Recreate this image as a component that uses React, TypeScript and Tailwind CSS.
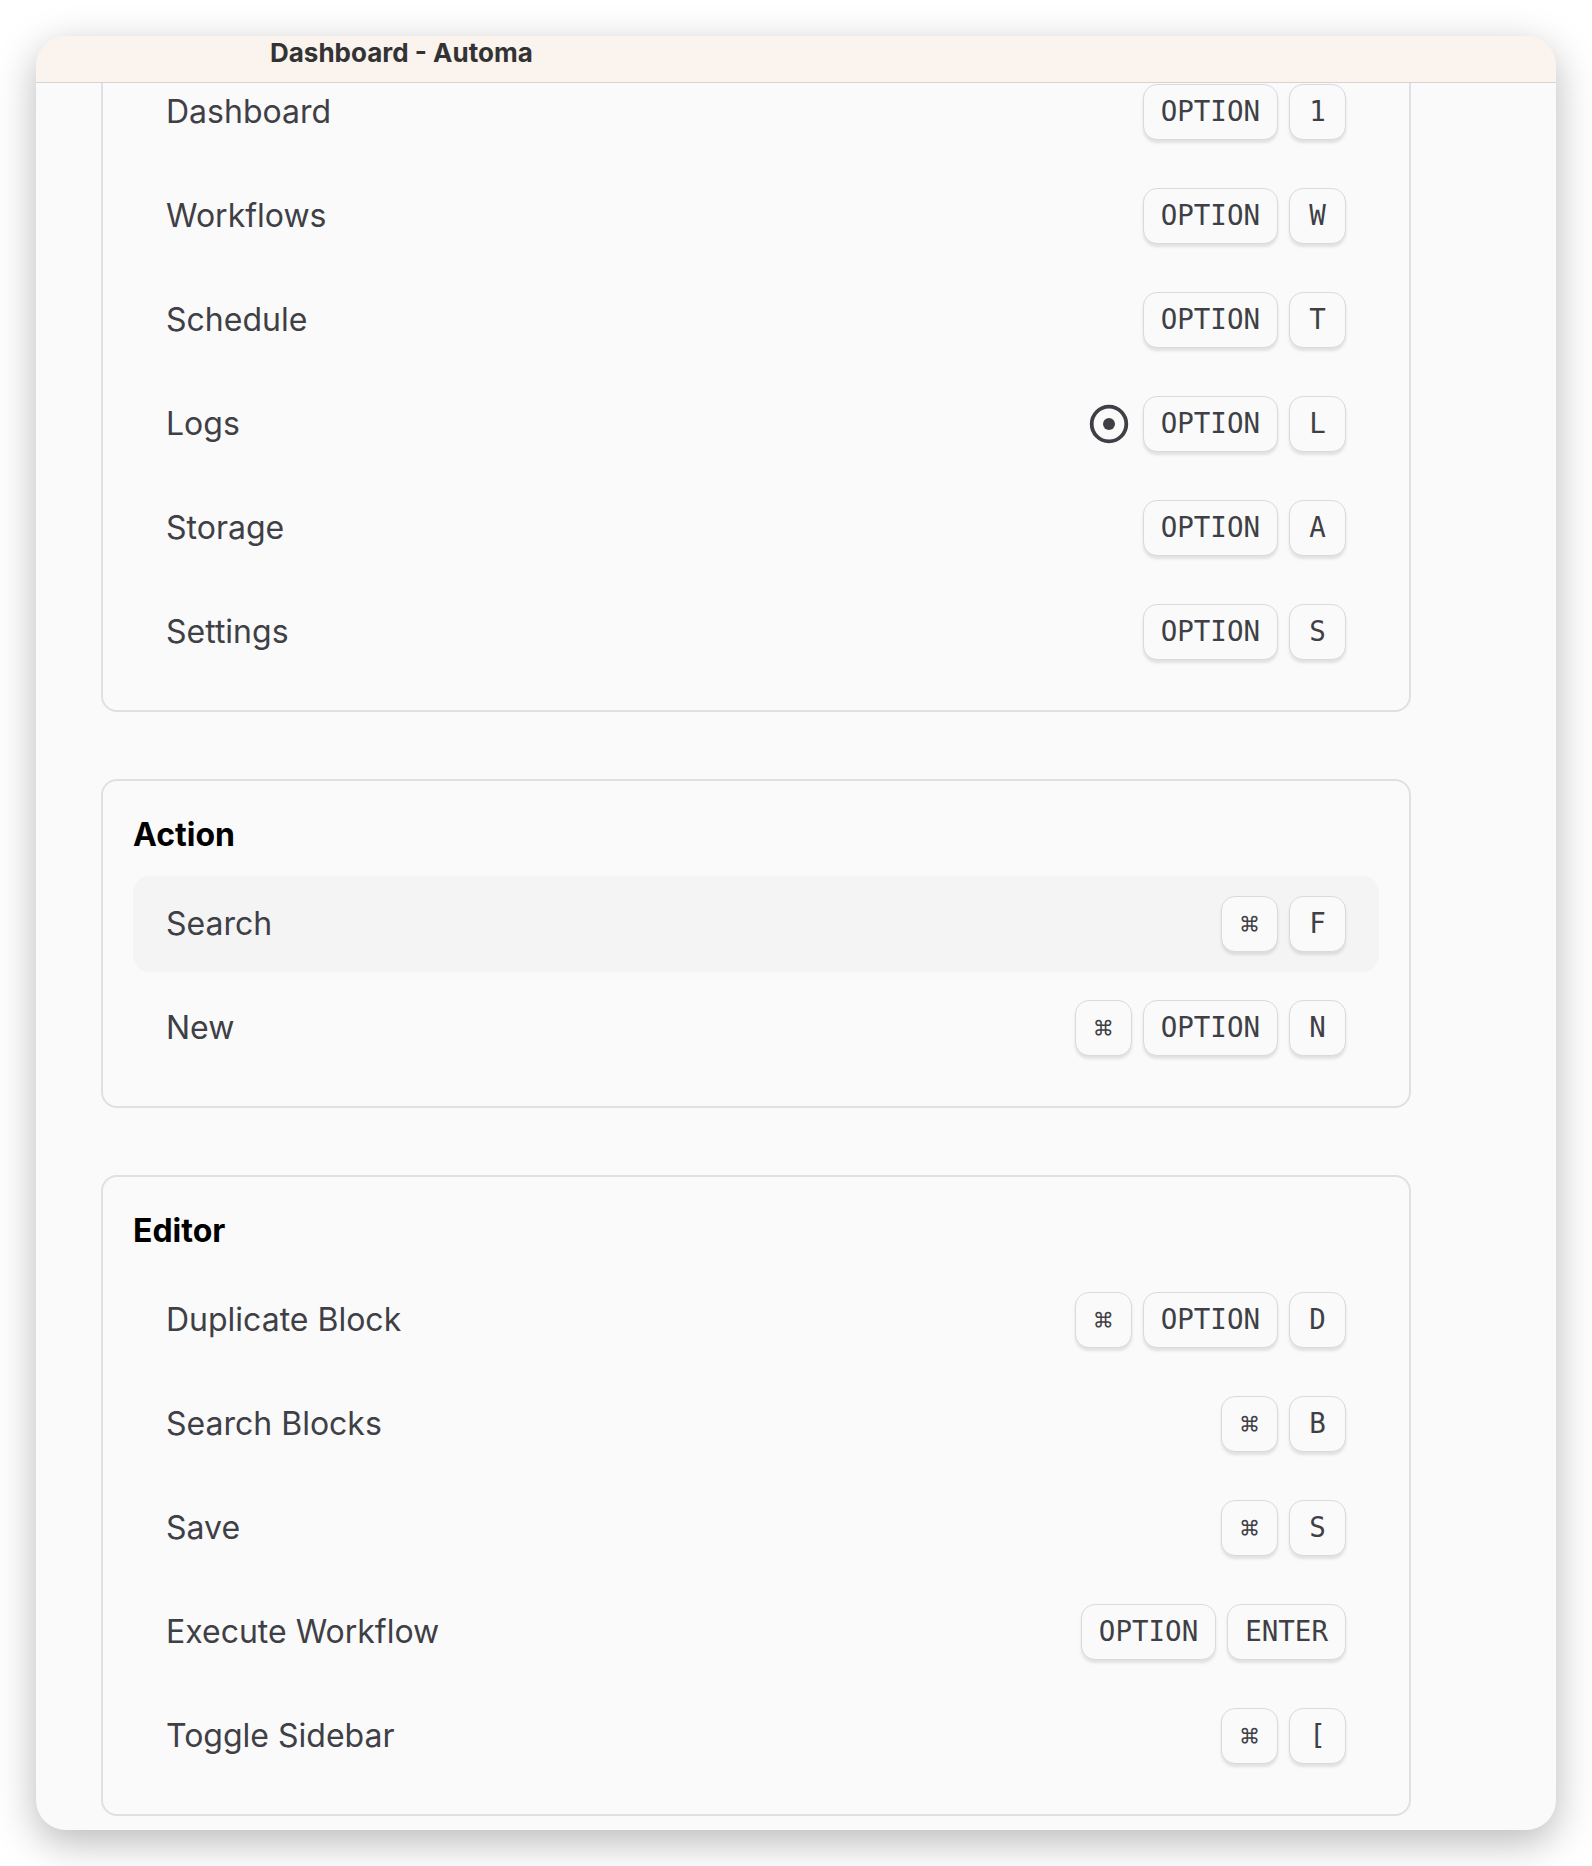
import React from 'react';

type Row = { label: string; keys: string[]; active?: boolean; recording?: boolean };
type Section = { title: string; rows: Row[]; scrolled?: boolean };

const sections: Section[] = [
  {
    title: 'General',
    scrolled: true,
    rows: [
      { label: 'Dashboard', keys: ['OPTION', '1'] },
      { label: 'Workflows', keys: ['OPTION', 'W'] },
      { label: 'Schedule', keys: ['OPTION', 'T'] },
      { label: 'Logs', keys: ['OPTION', 'L'], recording: true },
      { label: 'Storage', keys: ['OPTION', 'A'] },
      { label: 'Settings', keys: ['OPTION', 'S'] },
    ],
  },
  {
    title: 'Action',
    rows: [
      { label: 'Search', keys: ['⌘', 'F'], active: true },
      { label: 'New', keys: ['⌘', 'OPTION', 'N'] },
    ],
  },
  {
    title: 'Editor',
    rows: [
      { label: 'Duplicate Block', keys: ['⌘', 'OPTION', 'D'] },
      { label: 'Search Blocks', keys: ['⌘', 'B'] },
      { label: 'Save', keys: ['⌘', 'S'] },
      { label: 'Execute Workflow', keys: ['OPTION', 'ENTER'] },
      { label: 'Toggle Sidebar', keys: ['⌘', '['] },
    ],
  },
];

function Kbd({ k }: { k: string }) {
  const isCmd = k === '⌘';
  return (
    <kbd
      className={`flex h-[56px] min-w-[57px] items-center justify-center rounded-[14px] border border-[#dad9de] bg-[#fafafb] px-[17px] text-[#3f3f46] shadow-[0_3px_3px_rgba(0,0,0,0.1)] ${
        isCmd ? 'text-[30px]' : 'text-[27.5px]'
      }`}
      style={{ fontFamily: '"DejaVu Sans Mono", "Liberation Mono", monospace' }}
    >
      {k}
    </kbd>
  );
}

function RecordIcon() {
  return (
    <svg width="40" height="40" viewBox="0 0 40 40" className="mr-[3px] text-[#3f3f46]">
      <circle cx="20" cy="20" r="17.3" fill="none" stroke="currentColor" strokeWidth="3.8" />
      <circle cx="20" cy="20" r="6" fill="currentColor" />
    </svg>
  );
}

function ShortcutCard({ section }: { section: Section }) {
  return (
    <div className="rounded-2xl border-2 border-[#e0dfe4] p-[30px]">
      {/* top of the first card is scrolled under the title bar */}
      <h2
        className={`mb-[17px] h-12 text-[32px] font-bold leading-[48px] text-black ${section.scrolled ? 'invisible' : ''}`}
      >
        {section.title}
      </h2>
      <div className="flex flex-col gap-2">
        {section.rows.map((row) => (
          <div
            key={row.label}
            className={`flex h-[96px] items-center justify-between rounded-2xl px-[33px] ${
              row.active ? 'bg-[#f4f4f5]' : ''
            }`}
          >
            <span className="text-[32px] text-[#3f3f46]">{row.label}</span>
            <div className="flex items-center gap-[11px]">
              {row.recording && <RecordIcon />}
              {row.keys.map((k, i) => (
                <Kbd key={i} k={k} />
              ))}
            </div>
          </div>
        ))}
      </div>
    </div>
  );
}

export default function App() {
  return (
    <div className="min-h-screen bg-white p-[36px]" style={{ fontFamily: 'Inter, "Noto Sans", sans-serif' }}>
      <div className="flex h-[1794px] flex-col overflow-hidden rounded-[30px] bg-[#fafafa] shadow-[0_12px_40px_rgba(0,0,0,0.28)]">
        <div className="h-[47px] shrink-0 border-b border-[#d6d4d2] bg-[#fbf3ee] pl-[234px] pt-[1px]">
          <span className="text-[26px] font-bold leading-8 text-[#333]">Dashboard - Automa</span>
        </div>
        <div className="flex-1 overflow-hidden">
          <div className="-mt-[116px] ml-[65px] flex w-[1310px] flex-col gap-[67px]">
            {sections.map((s) => (
              <ShortcutCard key={s.title} section={s} />
            ))}
          </div>
        </div>
      </div>
    </div>
  );
}
